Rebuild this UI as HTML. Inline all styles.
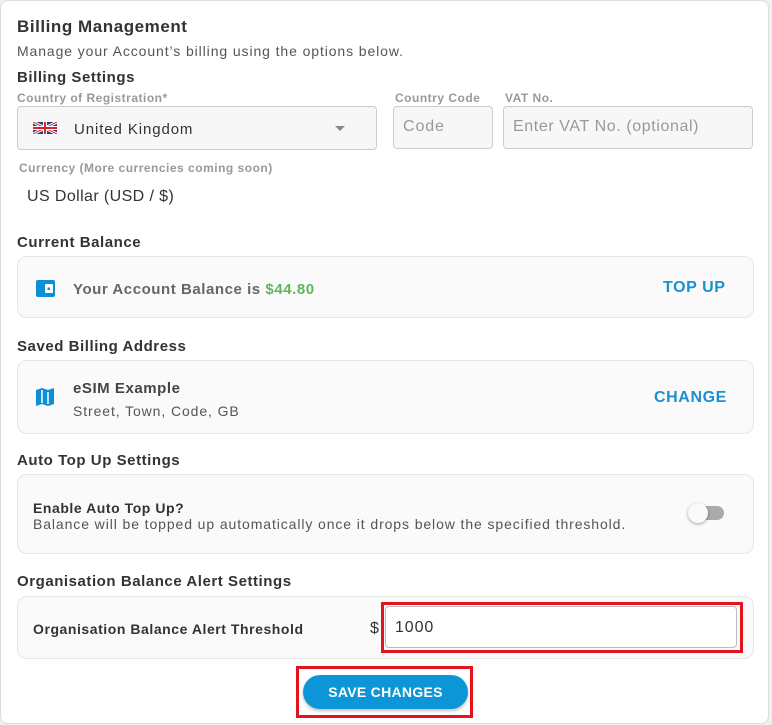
<!DOCTYPE html>
<html><head><meta charset="utf-8"><style>
*{box-sizing:border-box;margin:0;padding:0}
body{width:772px;height:725px;background:#f0f0f0;font-family:"Liberation Sans",sans-serif;color:#333;position:relative;overflow:hidden}
.card{position:absolute;left:0;top:0;width:769px;height:724px;background:#fff;border:1px solid #ddd;border-radius:8px}
.a{position:absolute;white-space:nowrap;line-height:1;letter-spacing:0.9px}
.b{letter-spacing:0.55px}
.h{font-size:15px;font-weight:bold;color:#333;letter-spacing:0.55px}
.lbl{font-size:12px;font-weight:bold;color:#999;letter-spacing:0.5px}
.box{position:absolute;background:#f7f7f7;border:1px solid #ccc;border-radius:4px}
.pan{position:absolute;left:17px;width:737px;background:#fafafa;border:1px solid #e6e6e6;border-radius:10px}
.blue{color:#1a8fd1;font-size:16px;font-weight:bold;letter-spacing:0.6px}
</style></head><body>
<div class="card"></div>
<div class="a b" style="left:17px;top:18px;font-size:17px;font-weight:bold">Billing Management</div>
<div class="a" style="left:17px;top:44px;font-size:14px;color:#555">Manage your Account’s billing using the options below.</div>
<div class="a h" style="left:17px;top:70px">Billing Settings</div>
<div class="a lbl" style="left:17px;top:92px">Country of Registration*</div>
<div class="box" style="left:17px;top:106px;width:360px;height:44px"></div>
<svg class="a" style="left:33px;top:122px" width="24" height="12" viewBox="0 0 24 12"><rect width="24" height="12" fill="#1f3f8f"/><path d="M0 0L24 12M24 0L0 12" stroke="#fff" stroke-width="3"/><path d="M0 0L24 12M24 0L0 12" stroke="#d22" stroke-width="1"/><path d="M12 0V12M0 6H24" stroke="#fff" stroke-width="4"/><path d="M12 0V12M0 6H24" stroke="#d22" stroke-width="2"/></svg>
<div class="a" style="left:74px;top:122px;font-size:15px;color:#333">United Kingdom</div>
<div class="a" style="left:335px;top:126px;width:0;height:0;border-left:5px solid transparent;border-right:5px solid transparent;border-top:5px solid #888"></div>
<div class="a lbl" style="left:395px;top:92px">Country Code</div>
<div class="box" style="left:393px;top:106px;width:100px;height:43px"></div>
<div class="a" style="left:403px;top:119px;font-size:16px;color:#999">Code</div>
<div class="a lbl" style="left:505px;top:92px">VAT No.</div>
<div class="box" style="left:503px;top:106px;width:250px;height:43px"></div>
<div class="a" style="left:513px;top:119px;font-size:16px;color:#999;letter-spacing:0.6px">Enter VAT No. (optional)</div>
<div class="a lbl" style="left:19px;top:162px">Currency (More currencies coming soon)</div>
<div class="a" style="left:27px;top:189px;font-size:16px;color:#333;letter-spacing:0.4px">US Dollar (USD / $)</div>
<div class="a h" style="left:17px;top:235px">Current Balance</div>
<div class="pan" style="top:256px;height:62px"></div>
<svg class="a" style="left:36px;top:280px" width="19" height="17" viewBox="0 0 19 17"><rect width="19" height="17" rx="2" fill="#0c8fd6"/><rect x="9" y="4" width="8" height="9" rx="1" fill="#fff"/><rect x="11.5" y="7.5" width="2.5" height="2.5" fill="#0c8fd6"/></svg>
<div class="a b" style="left:73px;top:282px;font-size:15px;font-weight:bold;color:#666">Your Account Balance is <span style="color:#5cb85c">$44.80</span></div>
<div class="a blue" style="left:663px;top:280px">TOP UP</div>
<div class="a h" style="left:17px;top:339px">Saved Billing Address</div>
<div class="pan" style="top:360px;height:74px"></div>
<svg class="a" style="left:36px;top:388px" width="18" height="18" viewBox="0 0 18 18"><path d="M0 2L6 0L12 2L18 0V16L12 18L6 16L0 18Z" fill="#0c8fd6"/><path d="M6 2V15M12 4V16" stroke="#fff" stroke-width="1.5"/></svg>
<div class="a b" style="left:73px;top:381px;font-size:15px;font-weight:bold;color:#444">eSIM Example</div>
<div class="a" style="left:73px;top:404px;font-size:14px;color:#555">Street, Town, Code, GB</div>
<div class="a blue" style="left:654px;top:390px">CHANGE</div>
<div class="a h" style="left:17px;top:453px">Auto Top Up Settings</div>
<div class="pan" style="top:474px;height:80px"></div>
<div class="a b" style="left:33px;top:501px;font-size:14px;font-weight:bold;color:#333">Enable Auto Top Up?</div>
<div class="a" style="left:33px;top:517px;font-size:14px;color:#555">Balance will be topped up automatically once it drops below the specified threshold.</div>
<div class="a" style="left:690px;top:506px;width:34px;height:14px;border-radius:7px;background:#aaa"></div>
<div class="a" style="left:688px;top:503px;width:20px;height:20px;border-radius:50%;background:#fafafa;box-shadow:0 1px 3px rgba(0,0,0,.35)"></div>
<div class="a h" style="left:17px;top:574px">Organisation Balance Alert Settings</div>
<div class="pan" style="top:596px;height:63px"></div>
<div class="a b" style="left:33px;top:622px;font-size:14px;font-weight:bold;color:#333">Organisation Balance Alert Threshold</div>
<div class="a" style="left:370px;top:621px;font-size:16px;color:#333">$</div>
<div class="a" style="left:385px;top:606px;width:352px;height:42px;background:#fff;border:1px solid #bbb;border-radius:4px"></div>
<div class="a" style="left:395px;top:620px;font-size:16px;color:#333">1000</div>
<div class="a" style="left:381px;top:602px;width:362px;height:51px;border:3px solid #e3141e"></div>
<div class="a" style="left:303px;top:675px;width:165px;height:34px;border-radius:17px;background:#0c96d8;box-shadow:0 2px 3px rgba(0,0,0,.25);color:#fff;font-size:14px;font-weight:bold;text-align:center;line-height:34px;letter-spacing:0.3px">SAVE CHANGES</div>
<div class="a" style="left:296px;top:666px;width:177px;height:52px;border:3px solid #e3141e"></div>
</body></html>
